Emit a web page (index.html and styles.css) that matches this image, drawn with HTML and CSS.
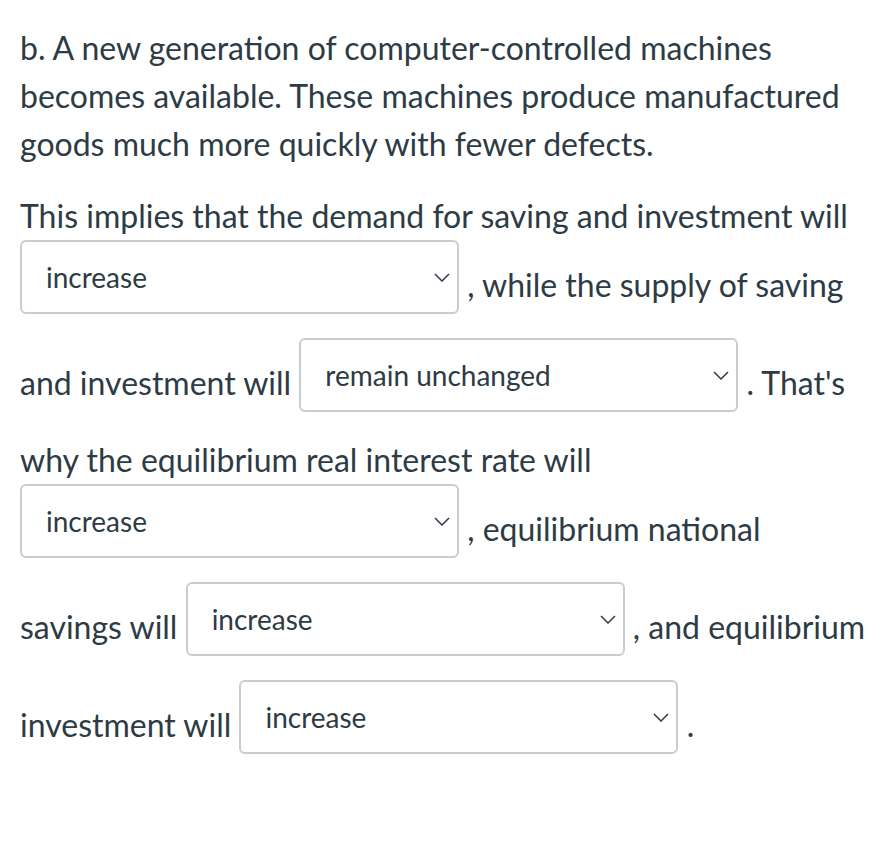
FILE: index.html
```html
<!DOCTYPE html>
<html lang="en">
<head>
<meta charset="utf-8">
<title>Question</title>
<link rel="stylesheet" href="styles.css">
</head>
<body>
<div class="question">
  <p class="para">b. A new generation of computer-controlled machines becomes available. These machines produce manufactured goods much more quickly with fewer defects.</p>
  <p class="para">This implies that the demand for saving and investment will <span class="select"><span class="select-value">increase</span><svg class="chev" viewBox="0 0 16 9" width="16" height="9"><path d="M1 1 L8 8 L15 1" /></svg></span> , while the supply of saving and investment will <span class="select"><span class="select-value">remain unchanged</span><svg class="chev" viewBox="0 0 16 9" width="16" height="9"><path d="M1 1 L8 8 L15 1" /></svg></span> . That's why the equilibrium real interest rate will <span class="select"><span class="select-value">increase</span><svg class="chev" viewBox="0 0 16 9" width="16" height="9"><path d="M1 1 L8 8 L15 1" /></svg></span> , equilibrium national savings will <span class="select"><span class="select-value">increase</span><svg class="chev" viewBox="0 0 16 9" width="16" height="9"><path d="M1 1 L8 8 L15 1" /></svg></span> , and equilibrium investment will <span class="select"><span class="select-value">increase</span><svg class="chev" viewBox="0 0 16 9" width="16" height="9"><path d="M1 1 L8 8 L15 1" /></svg></span> .</p>
</div>
</body>
</html>
```

FILE: styles.css
```css
html, body {
  margin: 0;
  padding: 0;
  background: #ffffff;
}

.question {
  width: 847px;
  padding: 24px 0 0 20px;
  font-family: Lato, "Noto Sans", sans-serif;
  font-size: 32px;
  line-height: 48px;
  color: #2d3b45;
}

.para {
  margin: 0 0 24px 0;
}

.select {
  display: inline-block;
  position: relative;
  box-sizing: border-box;
  width: 439px;
  height: 74px;
  margin-bottom: 24px;
  border: 2px solid #c7cdd1;
  border-radius: 6px;
  background: #ffffff;
  overflow: hidden;
  vertical-align: -41px;
  white-space: nowrap;
}

.select-value {
  display: block;
  padding-left: 24px;
  font-size: 28px;
  line-height: 70px;
  color: #2d3b45;
}

.chev {
  position: absolute;
  right: 7px;
  top: 31px;
  fill: none;
  stroke: #2d3b45;
  stroke-width: 1.5;
}
```
